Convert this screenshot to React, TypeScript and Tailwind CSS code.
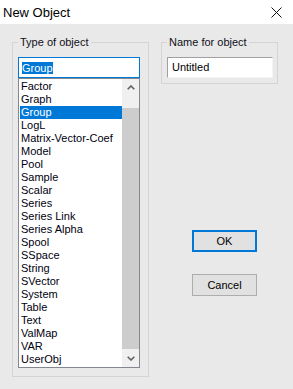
const ITEMS = [
  'Factor', 'Graph', 'Group', 'LogL', 'Matrix-Vector-Coef', 'Model', 'Pool', 'Sample',
  'Scalar', 'Series', 'Series Link', 'Series Alpha', 'Spool', 'SSpace', 'String',
  'SVector', 'System', 'Table', 'Text', 'ValMap', 'VAR', 'UserObj',
]

const SELECTED = 'Group'

function Chevron({ up }: { up?: boolean }) {
  return (
    <svg width="8" height="5" viewBox="0 0 8 5" className="block">
      <polyline
        points={up ? '0.7,4.3 4,1 7.3,4.3' : '0.7,0.7 4,4 7.3,0.7'}
        fill="none"
        stroke="#606060"
        strokeWidth="1.6"
      />
    </svg>
  )
}

function ScrollBar() {
  return (
    <div className="w-[17px] h-full flex flex-col bg-[#f0f0f0] shrink-0">
      <div className="h-[17px] flex items-center justify-center">
        <Chevron up />
      </div>
      <div className="h-[12px]" />
      <div className="h-[242px] bg-[#cdcdcd]" />
      <div className="h-[1px]" />
      <div className="h-[17px] flex items-center justify-center">
        <Chevron />
      </div>
    </div>
  )
}

export default function App() {
  return (
    <div
      className="w-[293px] h-[389px] flex flex-col bg-[#e9e9e9] text-black overflow-hidden"
      style={{ fontFamily: '"Liberation Sans", Arial, sans-serif' }}
    >
      <div className="h-[24px] bg-white flex items-center justify-between pl-[3px] pr-[11px] shrink-0">
        <span className="text-[13px] leading-[15px] text-black">New Object</span>
        <svg width="11" height="11" viewBox="0 0 11 11">
          <path d="M0.5 0.5 L10.5 10.5 M10.5 0.5 L0.5 10.5" stroke="#111" strokeWidth="1" />
        </svg>
      </div>

      <div className="flex pt-[12px] pl-[12px] text-[11px] leading-[13px]">
        <fieldset className="w-[137px] border border-[#d4d4d4] pl-[5px] pr-[8px] pt-[9px] pb-[8px]">
          <legend className="px-[2px] leading-[12px] text-[#101020]">Type of object</legend>
          <div className="h-[21px] border border-[#0078d7] bg-white flex items-center pl-[3px]">
            <span className="bg-[#0078d7] text-white leading-[12px]">Group</span>
          </div>
          <div className="h-[290px] border border-[#828790] bg-white flex mt-[0px]">
            <div className="flex-1 pt-[1px] pl-[1px] overflow-hidden">
              {ITEMS.map((it) => (
                <div
                  key={it}
                  className={
                    it === SELECTED
                      ? 'h-[13px] pl-[1px] bg-[#0078d7] text-white whitespace-nowrap'
                      : 'h-[13px] pl-[1px] text-[#000010] whitespace-nowrap'
                  }
                >
                  {it}
                </div>
              ))}
            </div>
            <ScrollBar />
          </div>
        </fieldset>

        <div className="ml-[12px] flex flex-col">
          <fieldset className="w-[117px] border border-[#d4d4d4] pl-[5px] pr-[4px] pt-[9px] pb-[5px]">
            <legend className="px-[2px] leading-[12px] text-[#101020]">Name for object</legend>
            <div className="h-[21px] bg-white border-t border-l border-t-[#a0a0a0] border-l-[#a0a0a0] border-r border-b border-r-[#f4f4f4] border-b-[#f4f4f4] flex items-center pl-[4px]">
              Untitled
            </div>
          </fieldset>

          <div className="ml-[31px] mt-[146px] flex flex-col gap-[22px]">
            <button className="w-[65px] h-[22px] border-2 border-[#0078d7] bg-[#e1e1e1] flex items-center justify-center text-[11px]">
              OK
            </button>
            <button className="w-[65px] h-[22px] border border-[#adadad] bg-[#e1e1e1] flex items-center justify-center text-[11px]">
              Cancel
            </button>
          </div>
        </div>
      </div>
    </div>
  )
}
